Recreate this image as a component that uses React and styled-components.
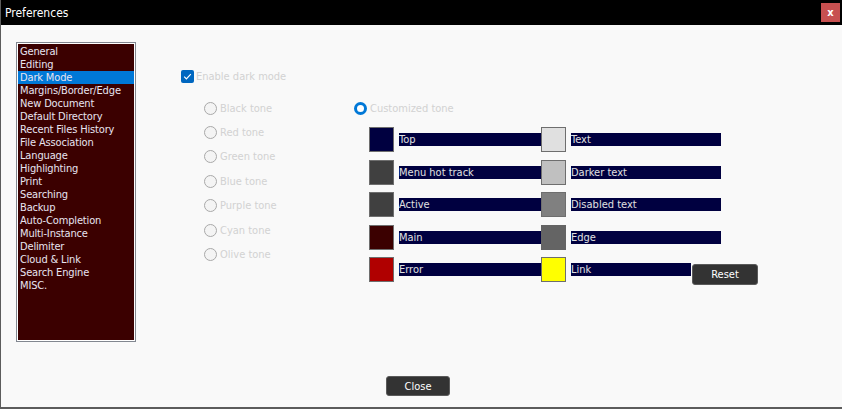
import styled, { createGlobalStyle } from 'styled-components'

const GlobalStyle = createGlobalStyle`
  html, body {
    margin: 0;
    padding: 0;
    background: #f9f9f9;
  }
  * { box-sizing: border-box; }
`

const uiFont = `"DejaVu Sans Condensed", "DejaVu Sans", "Liberation Sans", sans-serif`

const Window = styled.div`
  width: 842px;
  height: 409px;
  display: flex;
  flex-direction: column;
  background: #f9f9f9;
  border-left: 1px solid #5c5c5c;
  border-bottom: 2px solid #5c5c5c;
  font-family: ${uiFont};
  font-size: 11px;
  overflow: hidden;
`

const TitleBar = styled.div`
  height: 25px;
  flex: none;
  display: flex;
  align-items: center;
  justify-content: space-between;
  background: #000;
  color: #fff;
  padding: 0 2px 0 4px;
  font-size: 12px;
`

const CloseX = styled.div`
  width: 19px;
  height: 19px;
  background: #c75050;
  color: #fff;
  display: flex;
  align-items: center;
  justify-content: center;
  font-size: 11px;
  font-weight: bold;
  margin-bottom: 1px;
`

const Main = styled.div`
  flex: 1;
  display: flex;
  padding: 17px 0 0 15px;
`

const CategoryList = styled.ul`
  list-style: none;
  margin: 0;
  padding: 2px 1px 0 1px;
  width: 120px;
  height: 300px;
  background: #3b0000;
  border: 1px solid #828790;
  box-shadow: inset 0 0 0 1px #ffffff;
  flex: none;
`

const CategoryItem = styled.li`
  height: 13px;
  line-height: 13px;
  padding-left: 2px;
  color: #e8e4f0;
  letter-spacing: -0.15px;
  background: ${({ $active }) => ($active ? '#0078d7' : 'transparent')};
  white-space: nowrap;
`

const Panel = styled.div`
  margin-left: 45px;
  padding-top: 28px;
  display: flex;
  flex-direction: column;
`

const CheckRow = styled.div`
  display: flex;
  align-items: center;
  gap: 2px;
  height: 13px;
  color: #d2d2d2;
`

const CheckBox = styled.span`
  width: 13px;
  height: 13px;
  border-radius: 2px;
  background: #0067c0;
  display: flex;
  align-items: center;
  justify-content: center;
`

const ToneSection = styled.div`
  display: grid;
  grid-template-columns: 150px auto;
  margin: 13px 0 0 23px;
`

const RadioColumn = styled.div`
  display: flex;
  flex-direction: column;
`

const RadioRow = styled.div`
  height: 24.4px;
  display: flex;
  align-items: center;
  gap: 3px;
  color: #d2d2d2;
`

const Radio = styled.span`
  width: 13px;
  height: 13px;
  border-radius: 50%;
  flex: none;
  border: ${({ $checked }) => ($checked ? '3px solid #0078d7' : '1px solid #a9a9a9')};
  background: ${({ $checked }) => ($checked ? '#ffffff' : '#f4f4f4')};
`

const CustomColumn = styled.div`
  display: flex;
  flex-direction: column;
`

const SwatchGrid = styled.div`
  margin: 7px 0 0 15px;
  display: grid;
  grid-template-columns: repeat(2, auto);
  justify-content: start;
  row-gap: 7.5px;
`

const SwatchItem = styled.div`
  display: flex;
  align-items: center;
  height: 25px;
`

const Swatch = styled.span`
  width: 25px;
  height: 25px;
  flex: none;
  background: ${({ $color }) => $color};
  border: 1px solid ${({ $edge }) => $edge || '#6e6e6e'};
`

const ColorLabel = styled.span`
  width: ${({ $width }) => $width}px;
  height: 13px;
  line-height: 13px;
  margin-left: 5px;
  background: #000040;
  color: #e0e0e0;
  white-space: nowrap;
  overflow: hidden;
`

const Button = styled.button`
  font-family: ${uiFont};
  font-size: 11px;
  color: #fff;
  background: #333333;
  border: 1px solid #5a5a5a;
  border-radius: 3px;
  padding: 0;
  height: ${({ $h }) => $h}px;
  width: ${({ $w }) => $w}px;
`

const ResetButton = styled(Button)`
  align-self: flex-start;
  margin: 7px 0 0 1px;
`

const Footer = styled.div`
  flex: none;
  display: flex;
  justify-content: center;
  padding: 0 7px 11px 0;
`

const categories = [
  'General', 'Editing', 'Dark Mode', 'Margins/Border/Edge', 'New Document',
  'Default Directory', 'Recent Files History', 'File Association', 'Language',
  'Highlighting', 'Print', 'Searching', 'Backup', 'Auto-Completion',
  'Multi-Instance', 'Delimiter', 'Cloud & Link', 'Search Engine', 'MISC.',
]

const tones = ['Black tone', 'Red tone', 'Green tone', 'Blue tone', 'Purple tone', 'Cyan tone', 'Olive tone']

const colors = [
  { label: 'Top', color: '#000040', width: 142 },
  { label: 'Text', color: '#e0e0e0', width: 150 },
  { label: 'Menu hot track', color: '#404040', width: 142 },
  { label: 'Darker text', color: '#c0c0c0', width: 150 },
  { label: 'Active', color: '#404040', width: 142 },
  { label: 'Disabled text', color: '#808080', width: 150 },
  { label: 'Main', color: '#3b0000', width: 142 },
  { label: 'Edge', color: '#646464', edge: '#646464', width: 150 },
  { label: 'Error', color: '#b00000', width: 142 },
  { label: 'Link', color: '#ffff00', width: 120, reset: true },
]

export default function App() {
  return (
    <>
      <GlobalStyle />
      <Window>
        <TitleBar>
          <span>Preferences</span>
          <CloseX>x</CloseX>
        </TitleBar>
        <Main>
          <CategoryList>
            {categories.map(c => (
              <CategoryItem key={c} $active={c === 'Dark Mode'}>{c}</CategoryItem>
            ))}
          </CategoryList>
          <Panel>
            <CheckRow>
              <CheckBox>
                <svg width="9" height="9" viewBox="0 0 9 9">
                  <path d="M1.2 4.6 L3.4 6.8 L7.8 2.2" fill="none" stroke="#fff" strokeWidth="1.2" />
                </svg>
              </CheckBox>
              Enable dark mode
            </CheckRow>
            <ToneSection>
              <RadioColumn>
                {tones.map(t => (
                  <RadioRow key={t}>
                    <Radio />
                    {t}
                  </RadioRow>
                ))}
              </RadioColumn>
              <CustomColumn>
                <RadioRow>
                  <Radio $checked />
                  Customized tone
                </RadioRow>
                <SwatchGrid>
                  {colors.map(c => (
                    <SwatchItem key={c.label}>
                      <Swatch $color={c.color} $edge={c.edge} />
                      <ColorLabel $width={c.width}>{c.label}</ColorLabel>
                      {c.reset && <ResetButton $w={66} $h={21}>Reset</ResetButton>}
                    </SwatchItem>
                  ))}
                </SwatchGrid>
              </CustomColumn>
            </ToneSection>
          </Panel>
        </Main>
        <Footer>
          <Button $w={64} $h={20}>Close</Button>
        </Footer>
      </Window>
    </>
  )
}
